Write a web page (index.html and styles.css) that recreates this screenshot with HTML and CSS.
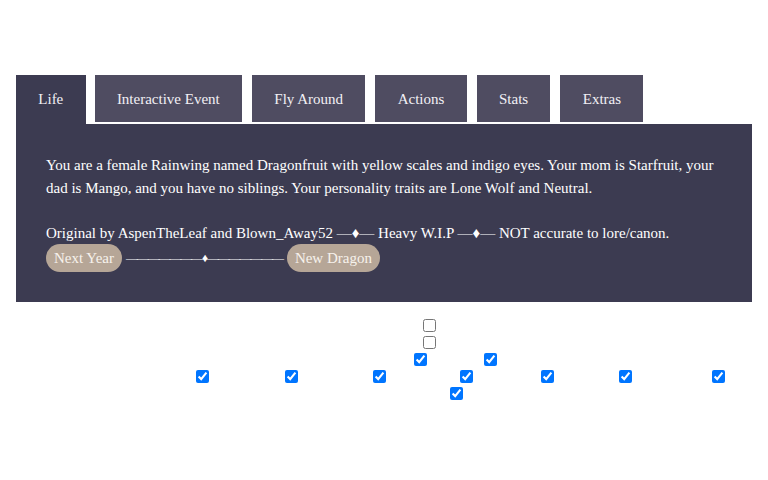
FILE: index.html
```
<!DOCTYPE html>
<html>
<head>
<meta charset="utf-8">
<link rel="stylesheet" href="styles.css">
</head>
<body>
<div class="page">
  <div class="tabs">
    <div class="tab active">Life</div>
    <div class="tab">Interactive Event</div>
    <div class="tab">Fly Around</div>
    <div class="tab">Actions</div>
    <div class="tab">Stats</div>
    <div class="tab">Extras</div>
  </div>
  <div class="panel">
    <p class="story">You are a female Rainwing named Dragonfruit with yellow scales and indigo eyes. Your mom is Starfruit, your dad is Mango, and you have no siblings. Your personality traits are Lone Wolf and Neutral.</p>
    <p class="credit">Original by AspenTheLeaf and Blown_Away52 —♦— Heavy W.I.P —♦— NOT accurate to lore/canon.</p>
    <div class="actions">
      <button class="pill">Next Year</button>
      <span class="divider">———————♦———————</span>
      <button class="pill">New Dragon</button>
    </div>
  </div>
  <div class="checks">
    <div class="row"><input type="checkbox" class="c1"></div>
    <div class="row"><input type="checkbox" class="c1"></div>
    <div class="row"><input type="checkbox" checked class="c2"><input type="checkbox" checked class="c3"></div>
    <div class="row"><input type="checkbox" checked class="c4"><input type="checkbox" checked class="c5"><input type="checkbox" checked class="c6"><input type="checkbox" checked class="c7"><input type="checkbox" checked class="c8"><input type="checkbox" checked class="c9"><input type="checkbox" checked class="c10"></div>
    <div class="row"><input type="checkbox" checked class="c11"></div>
  </div>
</div>
</body>
</html>
```
FILE: styles.css
```
html, body { margin: 0; padding: 0; background: #fff; }
body { font-family: "Liberation Serif", "Times New Roman", serif; font-size: 15px; color: #fff; }
.page { padding: 75px 16px 0 16px; }
.tabs { display: flex; gap: 10px; align-items: flex-start; }
.tab { background: #4f4c61; color: #f2f0f5; height: 47px; line-height: 49px; padding: 0 22.3px; box-sizing: border-box; }
.tab.active { background: #3c3b51; height: 49px; margin-right: -1px; }
.panel { background: #3c3b51; padding: 30px 30px 30px 30px; }
.story { margin: 0; line-height: 23px; }
.credit { margin: 22px 0 0 0; line-height: 23px; }
.actions { display: flex; align-items: center; margin-top: -1px; }
.pill { font-family: inherit; font-size: 15px; color: #f6f2ec; background: #b6a697; border: none; border-radius: 14px; height: 28px; padding: 0 8px; }
.divider { margin: 0 4px; color: #fff; font-size: 12px; letter-spacing: -1.15px; }
.checks { padding-top: 15px; }
.row { height: 17px; position: relative; }
.row input { position: absolute; top: 0; margin: 2px 0 0 0; width: 13px; height: 13px; }
.c1 { left: 407px; }
.c2 { left: 398px; }
.c3 { left: 468px; }
.c4 { left: 180px; }
.c5 { left: 269px; }
.c6 { left: 357px; }
.c7 { left: 444px; }
.c8 { left: 525px; }
.c9 { left: 603px; }
.c10 { left: 696px; }
.c11 { left: 434px; }
```
